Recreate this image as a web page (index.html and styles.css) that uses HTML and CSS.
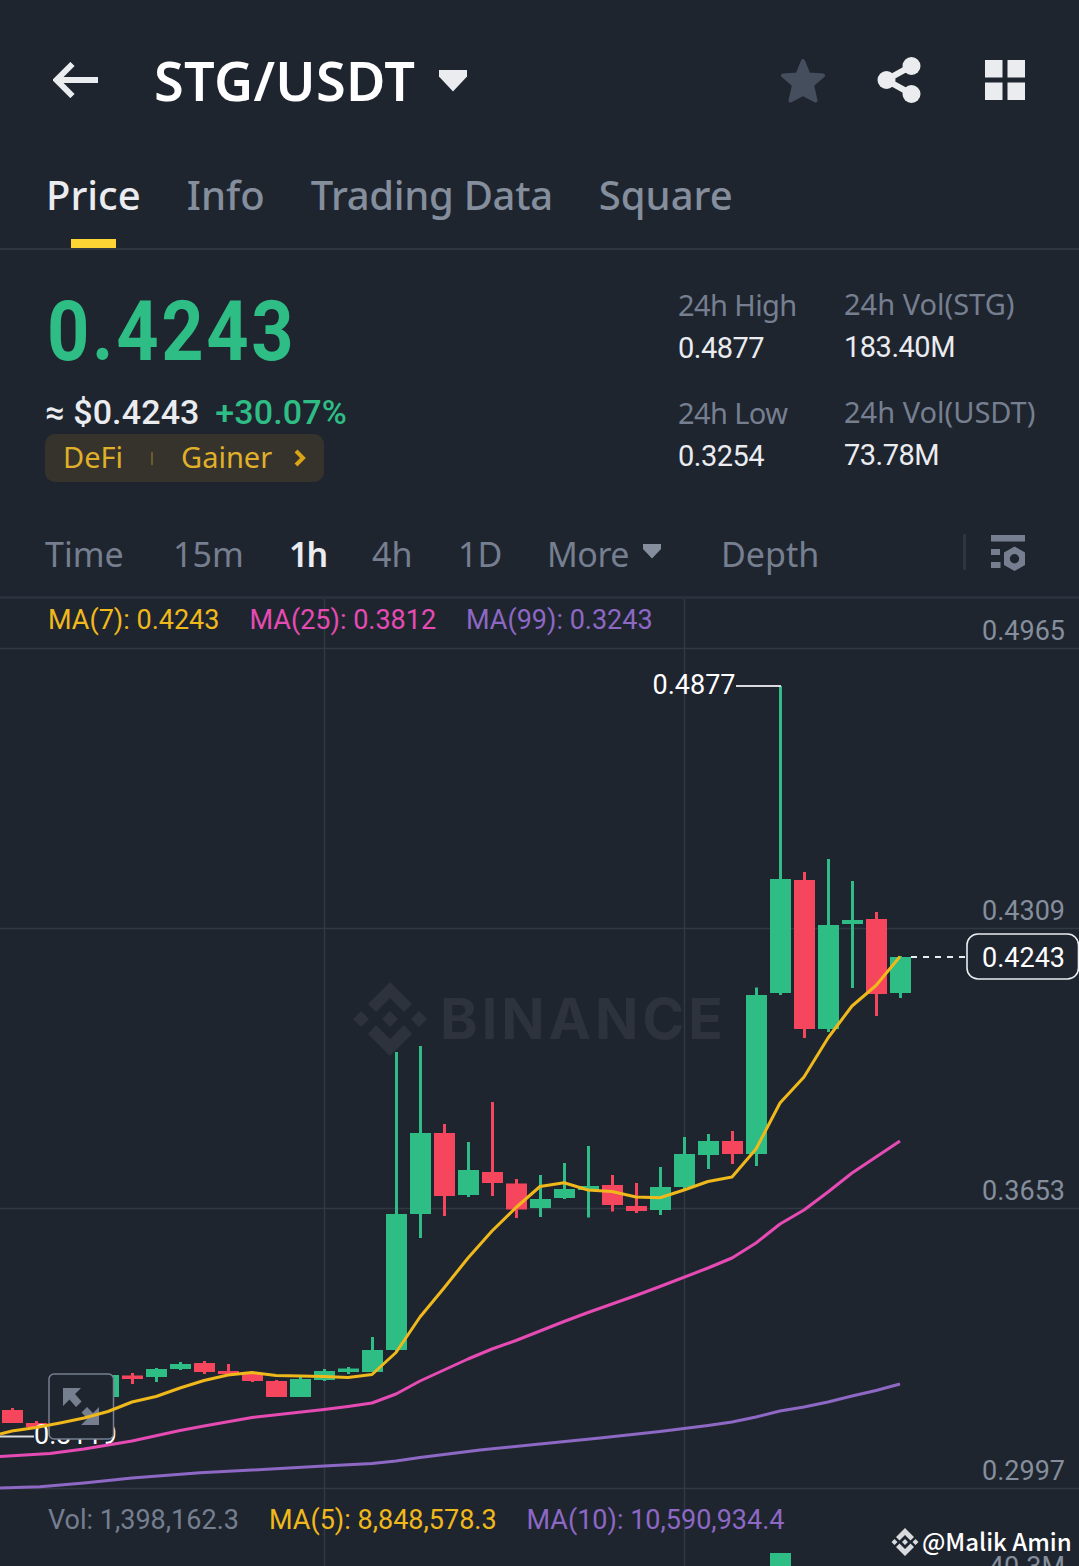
FILE: index.html
```html
<!DOCTYPE html>
<html lang="en">
<head>
<meta charset="UTF-8">
<meta name="viewport" content="width=device-width, initial-scale=1.0">
<title>STG/USDT</title>
<link rel="stylesheet" href="styles.css">
</head>
<body>

<header class="topbar">
  <svg width="46" height="36" viewBox="0 0 46 36"><path d="M19.500 2L3.500 18L19.500 34M4 18H45" fill="none" stroke="#eaecef" stroke-width="6"/></svg>
  <h1 class="pair">STG/USDT</h1>
  <svg class="pair-arrow" width="28" height="23" viewBox="0 0 28 23"><path d="M0 1H28V7.500L14 22.500L0 7.500Z" fill="#eaecef"/></svg>
  <div class="actions">
    <svg width="46" height="46" viewBox="0 0 46 46"><path d="M23 4L28.500 17.500L43 18.500L32 28L35.500 43.500L23 37L10.500 43.500L14 28L3 18.500L17.500 17.500Z" fill="#454e5d" stroke="#454e5d" stroke-width="4" stroke-linejoin="round"/></svg>
    <svg width="44" height="46" viewBox="0 0 44 46"><path d="M34.500 9L9 23L34.500 37" fill="none" stroke="#eaecef" stroke-width="6"/><circle cx="34.500" cy="9" r="9" fill="#eaecef"/><circle cx="9.500" cy="23" r="9" fill="#eaecef"/><circle cx="34.500" cy="37" r="9" fill="#eaecef"/></svg>
    <svg width="40" height="40" viewBox="0 0 40 40"><path d="M0 0H17.500V17.500H0ZM22.500 0H40V17.500H22.500ZM0 22.500H17.500V40H0ZM22.500 22.500H40V40H22.500Z" fill="#eaecef"/></svg>
  </div>
</header>

<nav class="tabs">
  <a class="tab active">Price</a>
  <a class="tab">Info</a>
  <a class="tab trading">Trading Data</a>
  <a class="tab">Square</a>
</nav>

<section class="summary">
  <div class="price-box">
    <div class="last-price"><span>0.4243</span></div>
    <div class="fiat">≈ $0.4243 <span class="change">+30.07%</span></div>
    <div class="tags">
      <span>DeFi</span>
      <i class="tag-sep"></i>
      <span>Gainer</span>
      <svg width="12" height="18" viewBox="0 0 12 18"><path d="M2 2L9 9L2 16" fill="none" stroke="#d9a416" stroke-width="4"/></svg>
    </div>
  </div>
  <div class="stats">
    <dl class="range">
      <dt>24h High</dt>
      <dd>0.4877</dd>
      <dt>24h Low</dt>
      <dd>0.3254</dd>
    </dl>
    <dl>
      <dt>24h Vol(STG)</dt>
      <dd>183.40M</dd>
      <dt>24h Vol(USDT)</dt>
      <dd>73.78M</dd>
    </dl>
  </div>
</section>

<nav class="intervals">
  <a class="time">Time</a>
  <a class="m15">15m</a>
  <a class="h1 active">1h</a>
  <a class="h4">4h</a>
  <a class="d1">1D</a>
  <a class="more">More<svg width="18" height="15" viewBox="0 0 18 15"><path d="M0 0H18V5L9 14.500L0 5Z" fill="#848e9c"/></svg></a>
  <a>Depth</a>
  <div class="chart-settings">
    <svg width="36" height="38" viewBox="0 0 36 38"><path d="M1 1H35V7.500H1ZM1 15H10V21H1ZM1 28H10.500V34H1Z" fill="#767f90"/><path fill-rule="evenodd" d="M24.500 12.500L35 18.500V31L24.500 37L14 31V18.500ZM24.500 20A4.700 4.700 0 1 0 24.500 29.400A4.700 4.700 0 1 0 24.500 20Z" fill="#767f90"/></svg>
  </div>
</nav>

<main class="chart">
  <svg width="1079" height="967" viewBox="0 599 1079 967">
    <g class="grid">
      <path d="M0 648.500H1079M0 928.500H1079M0 1208.500H1079M0 1488.500H1079M324.500 599V1566M684.500 599V1566"/>
    </g>
    <g class="brand">
      <path d="M390 982L412 1004L404 1012L390 998L376 1012L368 1004ZM390 1056L412 1034L404 1025L390 1039L376 1025L368 1034ZM390 1011L398 1019L390 1027L382 1019ZM361 1011L369 1019L361 1027L353 1019ZM419 1011L427 1019L419 1027L411 1019Z"/>
      <text x="440" y="1039">BINANCE</text>
    </g>
    <g id="candles"></g>
    <g class="mark">
      <path d="M736 686H781M0 1436.500H34"/>
      <text x="652.500" y="694">0.4877</text>
      <text x="34" y="1444">0.3119</text>
    </g>
    <g class="expand">
      <rect x="49" y="1374" width="64.500" height="65" rx="5"/>
      <path d="M63 1388H81L75 1394L81.500 1401.500L76 1407L69.500 1399.500L63 1406ZM99 1425H81L87.500 1418.500L81.500 1412.500L87 1407L93 1413L99 1407Z"/>
    </g>
    <g id="lines"></g>
    <g class="axis">
      <text x="1065" y="640">0.4965</text>
      <text x="1065" y="920">0.4309</text>
      <text x="1065" y="1200">0.3653</text>
      <text x="1065" y="1480">0.2997</text>
      <text x="1065" y="1576">40.3M</text>
    </g>
    <g class="current">
      <path d="M911 957H966" stroke-dasharray="6 6"/>
      <rect x="967" y="934" width="111.500" height="45" rx="11"/>
      <text x="982" y="967">0.4243</text>
    </g>
    <g class="legend">
      <text class="yellow" x="48" y="629">MA(7): 0.4243</text>
      <text class="pink" x="249.500" y="629">MA(25): 0.3812</text>
      <text class="purple" x="466" y="629">MA(99): 0.3243</text>
      <text class="grey" x="48" y="1529">Vol: 1,398,162.3</text>
      <text class="yellow" x="269" y="1529">MA(5): 8,848,578.3</text>
      <text class="purple" x="526.500" y="1529">MA(10): 10,590,934.4</text>
    </g>
    <rect class="up" x="770" y="1553" width="21" height="13"/>
    <g class="author">
      <path d="M905 1528L914 1537L910.500 1540.500L905 1535L899.500 1540.500L896 1537ZM905 1556L914 1547L910.500 1543.500L905 1549L899.500 1543.500L896 1547ZM905 1539L908 1542L905 1545L902 1542ZM894.500 1539L897.500 1542L894.500 1545L891.500 1542ZM915.500 1539L918.500 1542L915.500 1545L912.500 1542Z"/>
      <text x="922" y="1551">@Malik Amin</text>
    </g>
  </svg>
</main>

<script src="chart.js"></script>
</body>
</html>
```
FILE: styles.css
```css
* {
  box-sizing: border-box;
}

body {
  margin: 0;
  width: 1079px;
  height: 1566px;
  overflow: hidden;
  background: #1f252f;
  color: #eaecef;
  font-family: "Noto Sans", "Open Sans", sans-serif;
}

svg {
  display: block;
  flex: none;
}

/* top bar */
.topbar {
  display: flex;
  align-items: center;
  height: 160px;
  padding: 0 54px 0 53px;
}

.pair {
  margin: 0 0 0 55px;
  font-size: 54px;
  font-weight: 600;
  letter-spacing: .3px;
  color: #fff;
}

.pair-arrow {
  margin-left: 24px;
}

.actions {
  display: flex;
  align-items: center;
  margin-left: auto;
}

.actions svg + svg {
  margin-left: 51px;
}

.actions svg:last-child {
  margin-left: 64px;
}

/* tabs */
.tabs {
  display: flex;
  height: 90px;
  padding-left: 46px;
  border-bottom: 2px solid #2f3641;
}

.tab {
  position: relative;
  margin-right: 46px;
  line-height: 69px;
  font-size: 40px;
  font-weight: 500;
  color: #848e9c;
}

.tab.trading {
  letter-spacing: -.3px;
}

.tab.active {
  color: #eaecef;
}

.tab.active::after {
  content: "";
  position: absolute;
  left: 25px;
  bottom: 0;
  width: 45px;
  height: 9px;
  background: #fcd535;
}

/* price and 24h stats */
.summary {
  display: flex;
  height: 260px;
  padding-left: 45px;
}

.price-box {
  width: 633px;
}

.last-price {
  height: 97px;
  margin-top: 33px;
  padding-left: 2px;
  line-height: 98px;
  font-family: Roboto, sans-serif;
  font-size: 84px;
  font-weight: 700;
  color: #2ebd85;
}

.last-price span {
  display: inline-block;
  letter-spacing: 3px;
  transform: scaleX(.88);
  transform-origin: left;
}

.fiat {
  height: 54px;
  line-height: 64px;
  font-family: Roboto, sans-serif;
  font-size: 34px;
  font-weight: 500;
  letter-spacing: .15px;
}

.change {
  margin-left: 7px;
  color: #2ebd85;
}

.tags {
  display: flex;
  align-items: center;
  width: 279px;
  height: 48px;
  padding-left: 18px;
  border-radius: 10px;
  background: #35332c;
  line-height: 40px;
  font-size: 29px;
  color: #e0b02a;
}

.tags span {
  margin-bottom: 2px;
}

.tag-sep {
  width: 2px;
  height: 13px;
  margin: 0 28px;
  background: #6b5a2a;
}

.tags svg {
  margin-left: 22px;
}

.stats {
  display: flex;
  padding-top: 33px;
}

.stats dl {
  width: 166px;
  margin: 0;
  white-space: nowrap;
}

.stats .range {
  margin-top: 1px;
}

.stats dt {
  height: 43px;
  line-height: 42px;
  font-size: 29px;
  color: #767f90;
}

.range dt {
  letter-spacing: -.6px;
}

.stats dd {
  height: 65px;
  margin: 0;
  line-height: 42px;
  font-family: Roboto, sans-serif;
  font-size: 29px;
  letter-spacing: -.5px;
}

/* intervals */
.intervals {
  display: flex;
  height: 89px;
  padding-left: 45px;
  border-bottom: 3px solid #2b313c;
  line-height: 88px;
  font-size: 34px;
  color: #767f90;
}

.intervals .active {
  font-weight: 600;
  letter-spacing: -2px;
  color: #eaecef;
}

.time {
  width: 128px;
}

.m15 {
  width: 116px;
}

.h1 {
  width: 83px;
}

.h4 {
  width: 86px;
}

.d1 {
  width: 89px;
}

.more {
  display: flex;
  width: 174px;
  letter-spacing: -.5px;
}

.more svg {
  margin: 34px 0 0 14px;
}

.chart-settings {
  height: 36px;
  margin: 24px 53px 0 auto;
  padding-left: 24px;
  border-left: 3px solid #2f3641;
}

/* chart */
.chart {
  height: 967px;
  font-family: Roboto, sans-serif;
  font-size: 27px;
}

.grid path {
  stroke: #323943;
  stroke-width: 1.5;
}

.brand {
  fill: #2d323d;
  font-family: Inter, sans-serif;
  font-size: 57px;
  font-weight: 700;
  letter-spacing: 3.8px;
}

.up {
  fill: #2ebd85;
}

.down {
  fill: #f6465d;
}

.line {
  fill: none;
  stroke-width: 3;
  stroke-linejoin: round;
}

.line.yellow {
  stroke: #f0b91b;
}

.line.pink {
  stroke: #e64bb4;
}

.line.purple {
  stroke: #8d68c4;
}

.mark path {
  stroke: #d8dade;
  stroke-width: 2;
}

.mark text {
  fill: #fff;
}

.expand rect {
  fill: #1f252f;
  stroke: #767f90;
  stroke-width: 1.5;
}

.expand path {
  fill: #767f90;
}

.axis text {
  fill: #848e9c;
  text-anchor: end;
}

.current path {
  stroke: #eaecef;
  stroke-width: 1.8;
}

.current rect {
  fill: #1f252f;
  stroke: #eaecef;
  stroke-width: 1.6;
}

.current text {
  fill: #fff;
}

.legend .yellow {
  fill: #f0b91b;
}

.legend .pink {
  fill: #e64bb4;
}

.legend .purple {
  fill: #8d68c4;
}

.legend .grey {
  fill: #767f90;
}

.author path {
  fill: #d8dade;
}

.author text {
  fill: #fff;
  font-family: "Noto Sans CJK SC", "Noto Sans", sans-serif;
  font-size: 24px;
  font-weight: 500;
}
```
FILE: chart.js
```js
// [slot, direction, high, body top, body bottom, low]
const candles = [
  [0, "down", 1408, 1410, 1423, 1423],
  [1, "down", 1421, 1423, 1427, 1429],
  [4, "up", 1375, 1375, 1397, 1397],
  [5, "down", 1373, 1375.5, 1379, 1384],
  [6, "up", 1368, 1369, 1377, 1382],
  [7, "up", 1362, 1364, 1369, 1370],
  [8, "down", 1361, 1363, 1372, 1374],
  [9, "down", 1364, 1371, 1374, 1374],
  [10, "down", 1373, 1374, 1381, 1382],
  [11, "down", 1380, 1381, 1397, 1397],
  [12, "up", 1377, 1379, 1397, 1397],
  [13, "up", 1369, 1371, 1380, 1381],
  [14, "up", 1367, 1368.5, 1372, 1374],
  [15, "up", 1337, 1350, 1372, 1372],
  [16, "up", 1052, 1214, 1350, 1352],
  [17, "up", 1046, 1133, 1214, 1238],
  [18, "down", 1124, 1133, 1196, 1216],
  [19, "up", 1142, 1170, 1195, 1197],
  [20, "down", 1102, 1172, 1183, 1196],
  [21, "down", 1179, 1183.5, 1209.5, 1218],
  [22, "up", 1175, 1199, 1208, 1217],
  [23, "up", 1163, 1189, 1198, 1199],
  [24, "up", 1146, 1186, 1190, 1217.5],
  [25, "down", 1175, 1185, 1205, 1211.5],
  [26, "down", 1183, 1206, 1211, 1213],
  [27, "up", 1167, 1187, 1210, 1215],
  [28, "up", 1137, 1154, 1187, 1189],
  [29, "up", 1134, 1141, 1155, 1169],
  [30, "down", 1131, 1141, 1154, 1164],
  [31, "up", 987.5, 995, 1154, 1166],
  [32, "up", 686, 879, 993, 995],
  [33, "down", 872, 880, 1029, 1038],
  [34, "up", 859, 925, 1029, 1032],
  [35, "up", 881, 920, 924, 988],
  [36, "down", 912, 919, 994, 1016],
  [37, "up", 956, 957, 993, 998]
];

const lines = {
  yellow: "0,1434 12,1431 36,1427.5 60,1423 84,1418 108,1411.5 132,1402 156,1396.5 180,1388 204,1380.5 228,1375 252,1372.5 276,1375.5 300,1376 324,1376.5 348,1377.5 372,1374.5 396,1352.500 420,1317 444,1288 468,1258 492,1231 516,1207.5 540,1186.5 564,1182.8 588,1190 612,1191.5 636,1197 660,1197.7 684,1190 708,1181.5 732,1177 756,1149 780,1103 804,1077 828,1038 852,1006 876,985.5 900,956.5",
  pink: "0,1456.5 50,1453.5 84,1449 132,1441 180,1430.5 204,1426 252,1417.5 324,1409.5 348,1406.5 372,1403 396,1394 420,1381 444,1370 468,1359 492,1349 516,1340.5 540,1331 564,1321.5 588,1312.5 636,1295.5 660,1286.5 708,1268 732,1258 756,1243 780,1224 804,1210 828,1192 852,1173 876,1157 900,1141",
  purple: "0,1488 40,1486.7 84,1483 132,1478 200,1472.7 252,1470 324,1466 372,1463.5 396,1461 420,1457.5 480,1450 540,1444 600,1438 660,1431.5 708,1425.5 732,1422 756,1417 780,1411 804,1407 828,1402 852,1396 876,1390.5 900,1384"
};

const SLOT = 24;

document.getElementById("candles").innerHTML = candles.map(([i, dir, high, top, bottom, low]) => {
  const x = i * SLOT + 2;
  return `<rect class="${dir}" x="${x}" y="${top}" width="21" height="${bottom - top}"/>` +
    `<rect class="${dir}" x="${x + 9}" y="${high}" width="3" height="${low - high}"/>`;
}).join("");

document.getElementById("lines").innerHTML = Object.entries(lines).map(([color, points]) =>
  `<polyline class="line ${color}" points="${points}"/>`
).join("");
```
